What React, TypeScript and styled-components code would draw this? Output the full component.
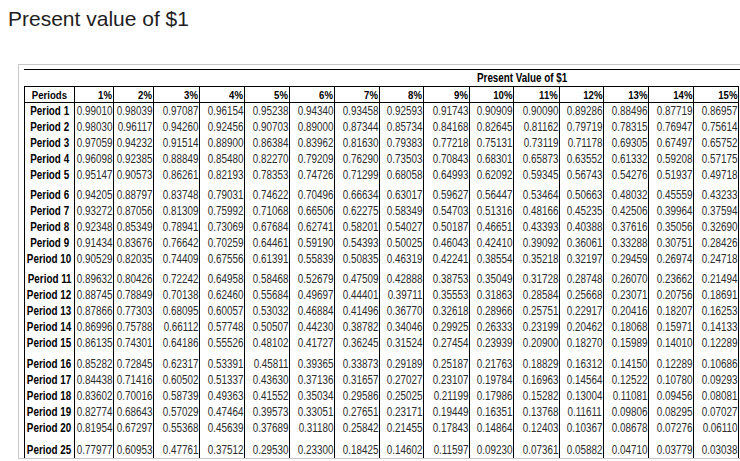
import React from "react";
import styled, { createGlobalStyle } from "styled-components";

const GlobalStyle = createGlobalStyle`
  html, body {
    margin: 0;
    padding: 0;
    background: #ffffff;
    overflow: hidden;
  }
  body {
    font-family: "Liberation Sans", Arial, sans-serif;
  }
`;

const RATES = [1, 2, 3, 4, 5, 6, 7, 8, 9, 10, 11, 12, 13, 14, 15];
const COLUMN_WIDTHS = [50, 39, 40, 46, 45, 45, 45, 45, 44, 46, 44, 46, 44, 45, 45, 46];
const GROUPS: { periods: number[]; gapAfter: number }[] = [
  { periods: [1, 2, 3, 4, 5], gapAfter: 4 },
  { periods: [6, 7, 8, 9, 10], gapAfter: 4 },
  { periods: [11, 12, 13, 14, 15], gapAfter: 5 },
  { periods: [16, 17, 18, 19, 20], gapAfter: 6 },
  { periods: [25], gapAfter: 0 },
];

const pv = (rate: number, n: number) => (1 / Math.pow(1 + rate / 100, n)).toFixed(5);

type Align = "left" | "center" | "right";
const justify = (a: Align) => (a === "left" ? "flex-start" : a === "center" ? "center" : "flex-end");

const Page = styled.div`
  padding-top: 7px;
`;

const Heading = styled.h1`
  margin: 0 0 0 8px;
  font-family: "Liberation Sans", Arial, sans-serif;
  font-weight: 400;
  font-size: 21px;
  line-height: 24px;
  color: #1e1e22;
`;

const Frame = styled.div`
  margin: 33px 0 0 18px;
  width: 760px;
  border: 1px solid #c6c6c6;
  padding: 4px 0 0 5px;
  box-sizing: border-box;
`;

const Sheet = styled.div`
  border-top: 1px solid #000000;
  font-family: "Liberation Sans", Arial, sans-serif;
`;

const Grid = styled.div`
  display: grid;
  grid-template-columns: ${COLUMN_WIDTHS.map((w) => `${w}px`).join(" ")};
  width: max-content;
`;

const CaptionRow = styled(Grid)`
  height: 16px;
`;

/* Narrow (Arial Narrow-like) glyphs: Liberation Sans compressed horizontally */
const Narrow = styled.span<{ $align: Align }>`
  display: inline-block;
  flex: none;
  white-space: nowrap;
  transform: scaleX(0.82);
  transform-origin: ${(p) => p.$align} center;
`;

const Caption = styled.div`
  grid-column: 11 / span 4;
  display: flex;
  padding-left: 8px;
  font-weight: 700;
  font-size: 12px;
  line-height: 16px;
  color: #000000;
`;

const Cell = styled.div<{ $last?: boolean; $align?: Align }>`
  box-sizing: border-box;
  display: flex;
  justify-content: ${(p) => justify(p.$align ?? "right")};
  border-left: 1px solid #000000;
  border-right: ${(p) => (p.$last ? "1px solid #000000" : "none")};
`;

const HeadCell = styled(Cell)`
  height: 17px;
  border-top: 1px solid #000000;
  border-bottom: 1px solid #000000;
  padding: 0 1px;
  font-weight: 700;
  font-size: 11.7px;
  line-height: 15px;
  color: #000000;
`;

const PeriodCell = styled(Cell)`
  height: 16px;
  font-weight: 700;
  font-size: 12px;
  line-height: 16px;
  color: #000000;
`;

const ValueCell = styled(Cell)`
  height: 16px;
  padding-right: 1px;
  font-size: 12px;
  line-height: 16px;
  color: #2c2c2c;
`;

const GapCell = styled(Cell)<{ $h: number }>`
  height: ${(p) => p.$h}px;
`;

export default function App() {
  const last = COLUMN_WIDTHS.length - 1;
  return (
    <Page>
      <GlobalStyle />
      <Heading>Present value of $1</Heading>
      <Frame>
        <Sheet>
          <CaptionRow>
            <Caption>
              <Narrow $align="left">Present Value of $1</Narrow>
            </Caption>
          </CaptionRow>
          <Grid>
            <HeadCell $align="center">
              <Narrow $align="center">Periods</Narrow>
            </HeadCell>
            {RATES.map((r, i) => (
              <HeadCell key={`h${r}`} $last={i + 1 === last}>
                <Narrow $align="right">{r}%</Narrow>
              </HeadCell>
            ))}
            {GROUPS.map((g, gi) => (
              <React.Fragment key={`g${gi}`}>
                {g.periods.map((n) => (
                  <React.Fragment key={`p${n}`}>
                    <PeriodCell $align="center">
                      <Narrow $align="center">Period {n}</Narrow>
                    </PeriodCell>
                    {RATES.map((r, i) => (
                      <ValueCell key={`v${n}-${r}`} $last={i + 1 === last}>
                        <Narrow $align="right">{pv(r, n)}</Narrow>
                      </ValueCell>
                    ))}
                  </React.Fragment>
                ))}
                {g.gapAfter > 0 &&
                  COLUMN_WIDTHS.map((_, ci) => (
                    <GapCell key={`s${gi}-${ci}`} $h={g.gapAfter} $last={ci === last} />
                  ))}
              </React.Fragment>
            ))}
          </Grid>
        </Sheet>
      </Frame>
    </Page>
  );
}
